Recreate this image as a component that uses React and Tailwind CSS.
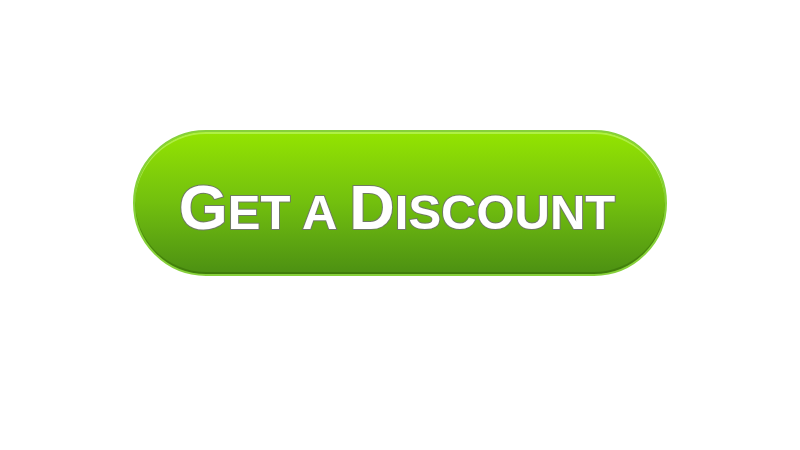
export default function App() {
  return (
    <div className="min-h-[450px] w-full bg-white flex justify-center pt-[130px]">
      <button
        type="button"
        className="w-[534px] h-[146px] rounded-full border-2 border-[#86d03a] bg-gradient-to-b from-[#94e400] via-[#72bf0e] to-[#4c9012] shadow-[inset_0_2px_0_rgba(210,255,150,0.45),inset_0_-2px_0_rgba(40,90,0,0.35)] flex items-center justify-center"
      >
        <span className="font-['Liberation_Sans',Arial,sans-serif] font-bold text-white leading-none [paint-order:stroke_fill] [-webkit-text-stroke:2px_#6f7a64] translate-x-[-3px] translate-y-[4px] whitespace-pre">
          <span className="text-[63px]">G</span>
          <span className="text-[49px]">ET A </span>
          <span className="text-[63px]">D</span>
          <span className="text-[49px]">ISCOUNT</span>
        </span>
      </button>
    </div>
  );
}
